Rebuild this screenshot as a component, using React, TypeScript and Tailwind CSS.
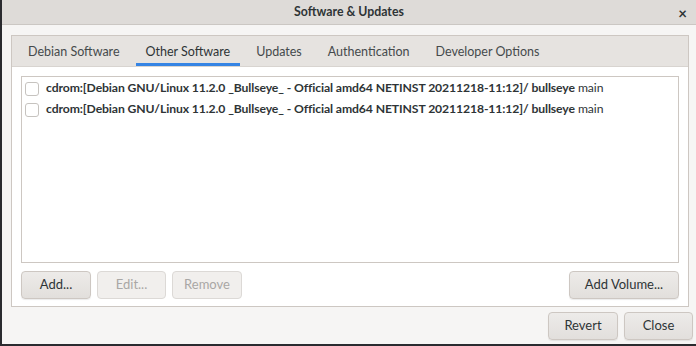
import React from "react";

const font = { fontFamily: 'Lato, "Noto Sans", sans-serif' };

function Btn({ label, disabled, className = "" }: { label: string; disabled?: boolean; className?: string }) {
  return (
    <div
      className={`flex h-[28px] items-center justify-center rounded-[4px] border text-[13px] ${
        disabled
          ? "border-[#dcd9d6] bg-[#f1efed] text-[#a9a7a5]"
          : "border-[#cdc7c2] bg-gradient-to-b from-[#edebe9] to-[#e2dfdc] text-[#2e3436] shadow-[0_1px_1px_rgba(0,0,0,0.08)]"
      } ${className}`}
    >
      {label}
    </div>
  );
}

function Row() {
  return (
    <div className="flex h-[21px] items-center">
      <div className="ml-[3px] h-[14px] w-[14px] rounded-[3px] border border-[#c6c3bf] bg-white" />
      <div className="ml-[7px] whitespace-nowrap text-[12.2px] tracking-[-0.1px] text-[#2e3436]">
        <span className="font-bold">cdrom:[Debian GNU/Linux 11.2.0 _Bullseye_ - Official amd64 NETINST 20211218-11:12]/ bullseye</span>
        <span> main</span>
      </div>
    </div>
  );
}

export default function App() {
  const tabs = ["Debian Software", "Other Software", "Updates", "Authentication", "Developer Options"];
  return (
    <div style={font} className="h-[346px] w-[696px] overflow-hidden border-b-[2px] border-l-[2px] border-[#2a2b2f] bg-[#f6f5f4]">
      <div className="relative flex h-[25px] items-center justify-center border-b border-[#cbc7c3] bg-[#dedbd8]">
        <span className="text-[12.3px] font-bold text-[#2e3436]">Software &amp; Updates</span>
        <span className="absolute right-[9px] top-[2px] text-[15px] font-bold text-[#2e3436]">×</span>
      </div>
      <div className="ml-[9px] mr-[7px] mt-[10px] border border-[#cdc7c2] bg-white">
        <div className="flex h-[31px] items-stretch gap-[6px] border-b border-[#d8d4d0] bg-[#e6e3e0] pl-[6px]">
          {tabs.map((t, i) => (
            <div
              key={t}
              className={`relative flex items-center px-[10px] pt-[2px] text-[12.5px] ${i === 1 ? "text-[#2e3436]" : "text-[#454a4c]"}`}
            >
              {t}
              {i === 1 && <div className="absolute bottom-0 left-[0px] right-[0px] h-[3px] bg-[#3584e4]" />}
            </div>
          ))}
        </div>
        <div className="px-[9px] pt-[9px]">
          <div className="h-[187px] border border-[#cdc7c2] bg-white pt-[1px]">
            <Row />
            <Row />
          </div>
          <div className="flex h-[43px] items-center gap-[6px]">
            <Btn label="Add..." className="w-[70px]" />
            <Btn label="Edit..." disabled className="w-[69px]" />
            <Btn label="Remove" disabled className="w-[70px]" />
            <div className="flex-1" />
            <Btn label="Add Volume..." className="w-[110px]" />
          </div>
        </div>
      </div>
      <div className="mr-[3px] mt-[5px] flex justify-end gap-[6px]">
        <Btn label="Revert" className="w-[70px]" />
        <Btn label="Close" className="w-[69px]" />
      </div>
    </div>
  );
}
